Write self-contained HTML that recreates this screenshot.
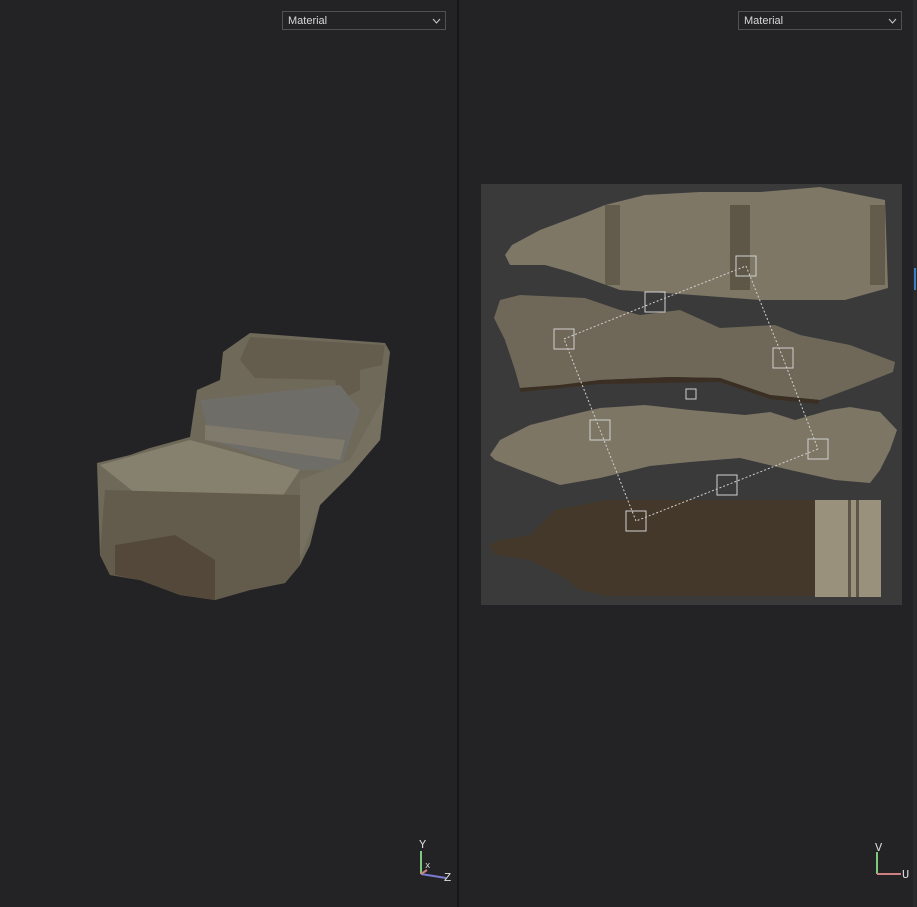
<!DOCTYPE html>
<html><head><meta charset="utf-8"><style>
html,body{margin:0;padding:0;background:#232325;width:917px;height:907px;overflow:hidden;font-family:"Liberation Sans",sans-serif;}
.sel{position:absolute;top:11px;height:19px;border:1px solid #505050;background:#232325;color:#d8d8d8;font-size:11px;line-height:19px;box-sizing:border-box;padding-left:5px;}
.sel svg{position:absolute;right:4px;top:6px;}
.lbl{position:absolute;color:#ddd;font-size:12px;font-family:"Liberation Mono",monospace;}
</style></head><body>
<div style="position:absolute;left:457px;top:0;width:2px;height:907px;background:#161617"></div>
<div style="position:absolute;left:913px;top:0;width:4px;height:907px;background:#2a2a2c"></div>
<div style="position:absolute;left:914px;top:268px;width:2px;height:22px;background:#3d7fc4"></div>
<div class="sel" style="left:282px;width:164px;">Material<svg width="9" height="6"><path d="M1 1 L4.5 5 L8 1" stroke="#ccc" fill="none"/></svg></div>
<div class="sel" style="left:738px;width:164px;">Material<svg width="9" height="6"><path d="M1 1 L4.5 5 L8 1" stroke="#ccc" fill="none"/></svg></div>

<svg width="917" height="907" style="position:absolute;left:0;top:0">
<polygon points="97,463 130,455 150,448 190,437 197,390 220,380 223,352 250,333 385,343 390,352 385,395 380,440 350,475 320,505 310,545 300,565 285,583 250,590 215,600 180,595 140,580 110,575 100,555" fill="#6f6959"/>
<polygon points="250,337 385,345 382,365 360,370 360,390 340,400 335,380 255,378 240,360" fill="#645d4e"/>
<polygon points="200,400 340,385 360,410 340,470 300,470 210,440" fill="#6f6d68"/>
<polygon points="205,425 345,440 340,460 205,440" fill="#807a6c"/>
<polygon points="100,465 190,440 300,470 280,500 150,505" fill="#86806f"/>
<polygon points="105,490 300,495 300,565 285,583 250,590 215,600 180,595 140,580 110,575 100,555" fill="#635c4c"/>
<polygon points="115,545 175,535 215,560 215,600 180,595 140,580 115,575" fill="#54483a"/>
<polygon points="300,480 350,460 385,395 380,440 350,475 320,505 300,560" fill="#767060"/>
<rect x="481" y="184" width="421" height="421" fill="#3a3a3b"/>
<polygon points="505,255 512,245 540,230 580,215 605,205 645,195 700,192 760,192 820,187 850,193 885,200 888,288 845,300 760,300 680,294 620,290 570,272 545,265 510,265" fill="#7e7766"/>
<rect x="730" y="205" width="20" height="85" fill="#5e5747"/>
<rect x="605" y="205" width="15" height="80" fill="#635c4c"/>
<rect x="870" y="205" width="15" height="80" fill="#635c4c"/>
<polygon points="494,318 500,300 520,295 585,298 620,310 640,315 680,310 720,328 775,325 800,335 850,345 895,362 893,372 860,385 820,400 770,395 720,378 670,377 600,380 560,385 520,388 515,370 505,340" fill="#6f6858"/>
<polygon points="520,388 560,385 600,380 670,377 720,378 770,395 820,400 818,404 770,399 720,382 600,384 520,392" fill="#3a2f22"/>
<polygon points="490,455 500,440 530,425 570,415 600,408 645,405 690,410 745,415 770,412 795,420 830,410 850,407 880,412 897,430 890,450 880,470 870,483 835,480 790,470 740,458 690,462 650,466 600,478 560,485 520,470 495,460" fill="#7d7665"/>
<polygon points="489,545 500,540 530,535 555,510 605,500 815,500 815,596 605,596 580,590 560,575 530,560 495,555" fill="#43382a"/>
<rect x="815" y="500" width="66" height="97" fill="#9a917d"/>
<rect x="848" y="500" width="3" height="97" fill="#5d5545"/><rect x="856" y="500" width="3" height="97" fill="#5d5545"/>
<g stroke="#d0d0d0" stroke-width="1" fill="none">
<path d="M564 339 L655 302 L746 266 M746 266 L783 358 L818 449 M818 449 L727 485 L636 521 M636 521 L600 430 L564 339" stroke-dasharray="2,2"/>
<rect x="554" y="329" width="20" height="20"/><rect x="645" y="292" width="20" height="20"/><rect x="736" y="256" width="20" height="20"/>
<rect x="773" y="348" width="20" height="20"/><rect x="808" y="439" width="20" height="20"/><rect x="717" y="475" width="20" height="20"/>
<rect x="626" y="511" width="20" height="20"/><rect x="590" y="420" width="20" height="20"/><rect x="686" y="389" width="10" height="10"/>
</g>
<line x1="421" y1="851" x2="421" y2="874" stroke="#7fc97f" stroke-width="2"/>
<line x1="421" y1="874" x2="446" y2="878" stroke="#7b7bd0" stroke-width="2"/>
<line x1="421" y1="874" x2="427" y2="870" stroke="#d08080" stroke-width="2"/>
<line x1="877" y1="852" x2="877" y2="874" stroke="#7fc97f" stroke-width="2"/>
<line x1="877" y1="874" x2="901" y2="874" stroke="#d08080" stroke-width="2"/>
</svg>
<div class="lbl" style="left:419px;top:838px;">Y</div>
<div class="lbl" style="left:425px;top:861px;font-size:9px">x</div>
<div class="lbl" style="left:444px;top:871px;">Z</div>
<div class="lbl" style="left:875px;top:841px;">V</div>
<div class="lbl" style="left:902px;top:868px;">U</div>
</body></html>
